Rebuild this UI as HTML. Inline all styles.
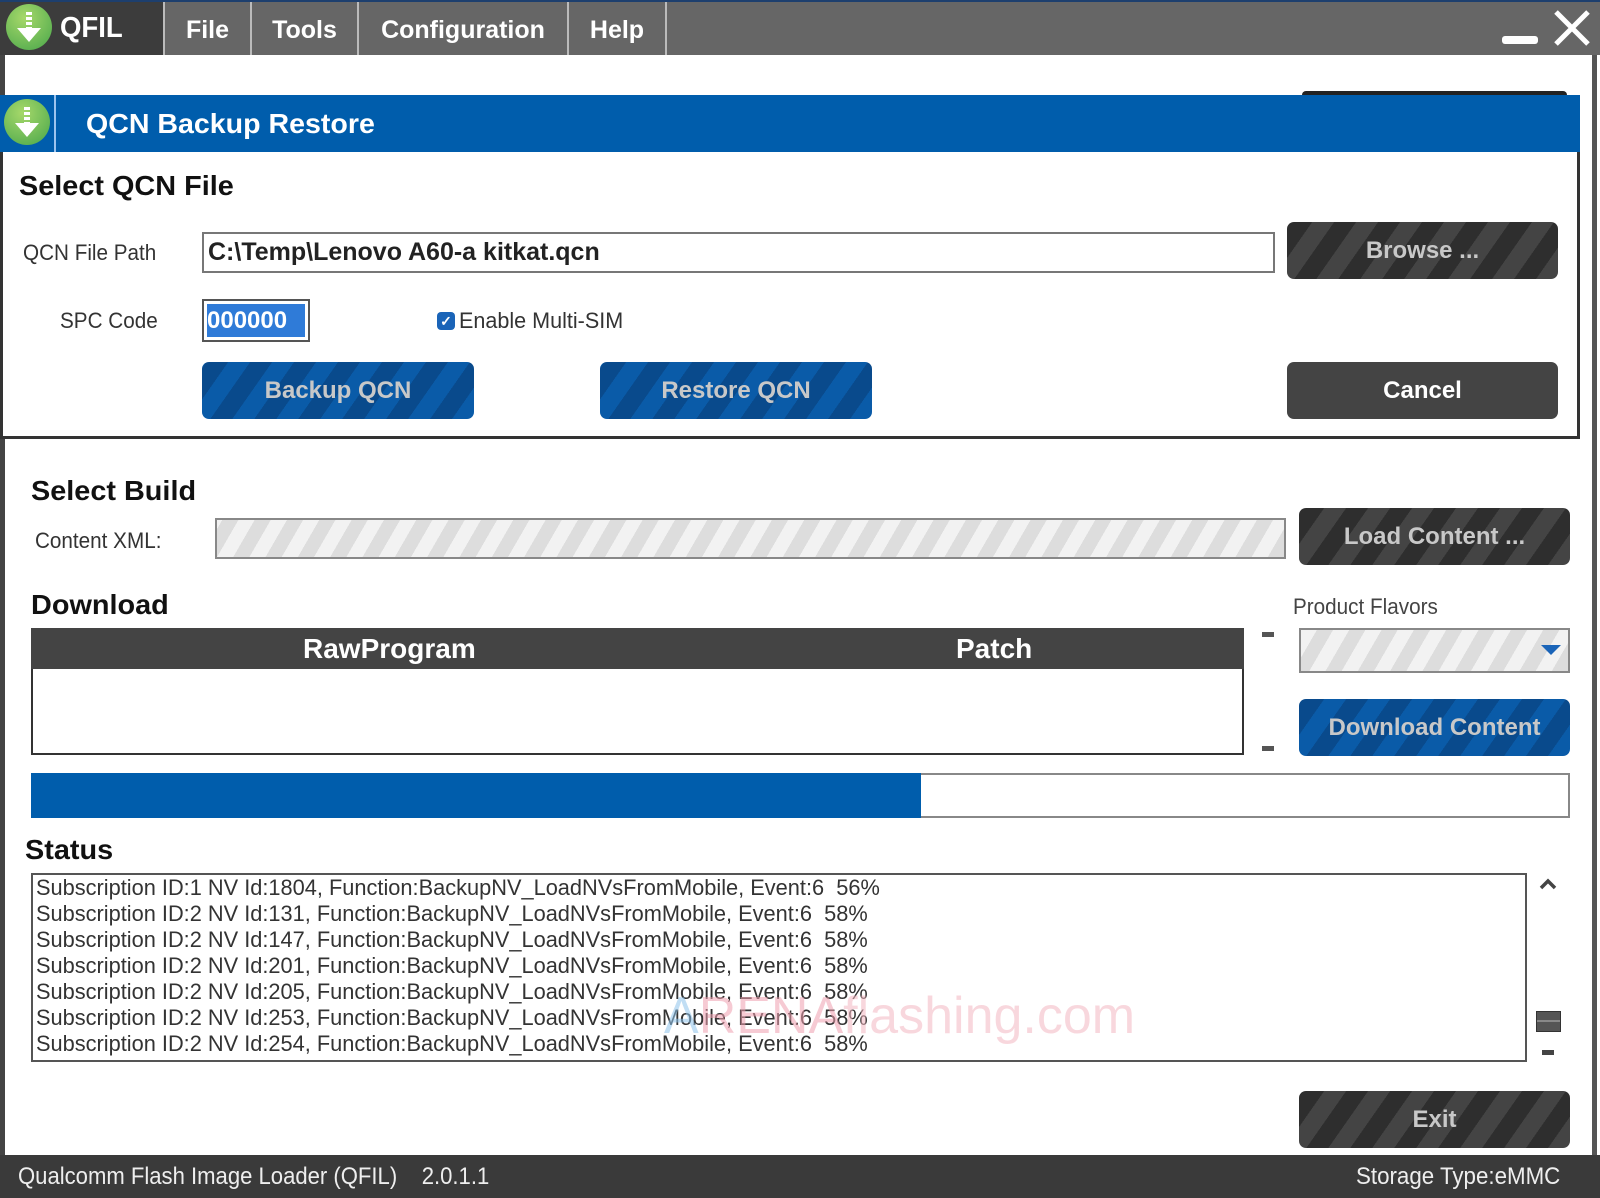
<!DOCTYPE html>
<html><head><meta charset="utf-8"><style>
*{margin:0;padding:0;box-sizing:border-box}
body{width:1600px;height:1198px;position:relative;overflow:hidden;background:#fff;font-family:"Liberation Sans",Arial,sans-serif}
.a{position:absolute}
.title{left:0;top:0;width:1600px;height:55px;background:#666;border-top:2px solid #1d3f6e}
.menu{top:2px;height:53px;color:#fff;font-weight:bold;font-size:25px;line-height:56px;text-align:center;border-left:2px solid #bbb}
.sbtn{border-radius:7px;color:#c8c8c8;font-weight:bold;font-size:24px;text-align:center;line-height:57px;height:57px;width:271px;
 background:repeating-linear-gradient(-55deg,#444 0 18px,#2e2e2e 18px 36px)}
.bbtn{border-radius:7px;color:#c8c8c8;font-weight:bold;font-size:24px;text-align:center;line-height:57px;height:57px;width:272px;
 background:repeating-linear-gradient(-55deg,#0a5ba8 0 18px,#094a8c 18px 36px)}
.lbl{color:#333;font-size:22px;transform:scaleX(.94);transform-origin:left}
.h{font-weight:bold;font-size:28px;color:#111;transform:scaleX(1.03);transform-origin:left}
.log{font-size:22px;color:#333;line-height:26px;white-space:pre;transform:scaleX(.99);transform-origin:left}
.icon{border-radius:50%;background:radial-gradient(circle at 40% 30%,#a6d86a,#48a64a)}
</style></head><body>
<div class="a title"></div>
<div class="a" style="left:0;top:2px;width:163px;height:53px;background:#3c3c3c"></div>
<div class="a icon" style="left:6px;top:4px;width:46px;height:46px"><svg width="46" height="46"><path d="M23 8v18" stroke="#fff" stroke-width="6" stroke-dasharray="3 2"/><path d="M11 24h24L23 38z" fill="#fff"/></svg></div>
<div class="a" style="left:60px;top:2px;color:#fff;font-size:29px;line-height:52px;font-weight:bold;transform:scaleX(.95);transform-origin:left">QFIL</div>
<div class="a menu" style="left:163px;width:87px">File</div>
<div class="a menu" style="left:250px;width:107px">Tools</div>
<div class="a menu" style="left:357px;width:210px">Configuration</div>
<div class="a menu" style="left:567px;width:98px">Help</div>
<div class="a" style="left:665px;top:2px;width:2px;height:53px;background:#bbb"></div>
<div class="a" style="left:1502px;top:36px;width:36px;height:8px;background:#fff;border-radius:3px"></div>
<svg class="a" style="left:1552px;top:8px" width="40" height="40"><path d="M4 4L36 36M36 4L4 36" stroke="#fff" stroke-width="5"/></svg>
<div class="a" style="left:0;top:55px;width:5px;height:1100px;background:#444"></div>
<div class="a" style="left:1592px;top:55px;width:5px;height:1100px;background:#555"></div>
<div class="a" style="left:1302px;top:91px;width:265px;height:6px;background:#222;border-radius:4px 4px 0 0"></div>
<div class="a" style="left:0;top:95px;width:1580px;height:344px;border:3px solid #333;border-top:none;background:#fff"></div>
<div class="a" style="left:0;top:95px;width:1580px;height:57px;background:#005dac"></div>
<div class="a" style="left:54px;top:95px;width:2px;height:57px;background:#9cc3ee"></div>
<div class="a icon" style="left:4px;top:99px;width:46px;height:46px"><svg width="46" height="46"><path d="M23 8v18" stroke="#fff" stroke-width="6" stroke-dasharray="3 2"/><path d="M11 24h24L23 38z" fill="#fff"/></svg></div>
<div class="a" style="left:86px;top:95px;line-height:57px;color:#fff;font-weight:bold;font-size:28px;transform:scaleX(1.02);transform-origin:left">QCN Backup Restore</div>
<div class="a h" style="left:19px;top:170px">Select QCN File</div>
<div class="a lbl" style="left:23px;top:240px">QCN File Path</div>
<div class="a" style="left:202px;top:232px;width:1073px;height:41px;border:2px solid #777;font-size:25px;line-height:37px;padding-left:4px;color:#222;font-weight:bold">C:\Temp\Lenovo A60-a kitkat.qcn</div>
<div class="a sbtn" style="left:1287px;top:222px">Browse ...</div>
<div class="a lbl" style="left:60px;top:308px">SPC Code</div>
<div class="a" style="left:202px;top:299px;width:108px;height:43px;border:2px solid #555;padding:3px"><div style="background:#2f7bd8;color:#fff;font-size:24px;line-height:33px;height:33px;font-weight:bold">000000</div></div>
<div class="a" style="left:437px;top:312px;width:18px;height:18px;background:#1a64b8;border-radius:4px;color:#fff;font-size:14px;line-height:18px;text-align:center;font-weight:bold">✓</div>
<div class="a lbl" style="left:459px;top:308px;color:#333;transform:scaleX(.98)">Enable Multi-SIM</div>
<div class="a bbtn" style="left:202px;top:362px">Backup QCN</div>
<div class="a bbtn" style="left:600px;top:362px">Restore QCN</div>
<div class="a" style="left:1287px;top:362px;width:271px;height:57px;border-radius:7px;background:#444;color:#fff;font-weight:bold;font-size:24px;text-align:center;line-height:57px">Cancel</div>
<div class="a h" style="left:31px;top:475px">Select Build</div>
<div class="a lbl" style="left:35px;top:528px">Content XML:</div>
<div class="a" style="left:215px;top:518px;width:1071px;height:41px;border:2px solid #888;background:repeating-linear-gradient(-60deg,#ddd 0 14px,#f2f2f2 14px 28px)"></div>
<div class="a sbtn" style="left:1299px;top:508px">Load Content ...</div>
<div class="a h" style="left:31px;top:589px">Download</div>
<div class="a lbl" style="left:1293px;top:594px;color:#444">Product Flavors</div>
<div class="a" style="left:31px;top:628px;width:1213px;height:127px;border:2px solid #333;background:#fff"></div>
<div class="a" style="left:31px;top:628px;width:1213px;height:41px;background:#444;color:#fff;font-weight:bold;font-size:28px;line-height:42px"><span class="a" style="left:272px">RawProgram</span><span class="a" style="left:925px">Patch</span></div>
<div class="a" style="left:1262px;top:632px;width:12px;height:5px;background:#555"></div>
<div class="a" style="left:1262px;top:746px;width:12px;height:5px;background:#555"></div>
<div class="a" style="left:1299px;top:628px;width:271px;height:45px;border:2px solid #888;background:repeating-linear-gradient(-60deg,#ddd 0 14px,#f2f2f2 14px 28px)"></div>
<svg class="a" style="left:1540px;top:643px" width="22" height="14"><path d="M1 2h20L11 12z" fill="#1a64b8"/></svg>
<div class="a bbtn" style="left:1299px;top:699px;width:271px">Download Content</div>
<div class="a" style="left:31px;top:773px;width:1539px;height:45px;border:2px solid #888;background:#fff"></div>
<div class="a" style="left:31px;top:773px;width:890px;height:45px;background:#005dac"></div>
<div class="a h" style="left:25px;top:834px">Status</div>
<div class="a" style="left:31px;top:873px;width:1496px;height:189px;border:2px solid #555"></div>
<div class="a log" style="left:36px;top:875px">Subscription ID:1 NV Id:1804, Function:BackupNV_LoadNVsFromMobile, Event:6  56%
Subscription ID:2 NV Id:131, Function:BackupNV_LoadNVsFromMobile, Event:6  58%
Subscription ID:2 NV Id:147, Function:BackupNV_LoadNVsFromMobile, Event:6  58%
Subscription ID:2 NV Id:201, Function:BackupNV_LoadNVsFromMobile, Event:6  58%
Subscription ID:2 NV Id:205, Function:BackupNV_LoadNVsFromMobile, Event:6  58%
Subscription ID:2 NV Id:253, Function:BackupNV_LoadNVsFromMobile, Event:6  58%
Subscription ID:2 NV Id:254, Function:BackupNV_LoadNVsFromMobile, Event:6  58%</div>
<div class="a" style="left:664px;top:988px;font-size:52px;line-height:56px;opacity:.55;transform:scaleX(1.0);transform-origin:left"><span style="color:#8fc4ec">A</span><span style="color:#f0a0b0">RENA</span><span style="color:#f4b8c2">flashing.com</span></div>
<svg class="a" style="left:1538px;top:877px" width="20" height="14"><path d="M3 11L10 4l7 7" stroke="#444" stroke-width="3.5" fill="none"/></svg>
<div class="a" style="left:1536px;top:1011px;width:25px;height:21px;background:#555;border:1px solid #333"><div style="margin-top:8px;height:2px;background:#888"></div></div>
<div class="a" style="left:1542px;top:1050px;width:12px;height:5px;background:#444"></div>
<div class="a sbtn" style="left:1299px;top:1091px;width:271px">Exit</div>
<div class="a" style="left:0;top:1155px;width:1600px;height:43px;background:#3a3a3a"></div>
<div class="a" style="left:18px;top:1155px;line-height:43px;color:#eee;font-size:24px;transform:scaleX(.92);transform-origin:left;white-space:pre">Qualcomm Flash Image Loader (QFIL)    2.0.1.1</div>
<div class="a" style="left:1356px;top:1155px;line-height:43px;color:#eee;font-size:24px;transform:scaleX(.93);transform-origin:left">Storage Type:eMMC</div>
</body></html>
